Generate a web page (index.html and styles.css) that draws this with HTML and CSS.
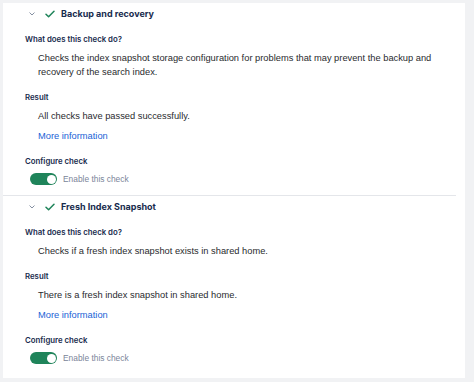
FILE: index.html
```html
<!DOCTYPE html>
<html>
<head>
<meta charset="utf-8">
<link rel="stylesheet" href="styles.css">
</head>
<body>
<div class="panel">
  <section class="check">
    <div class="check-head">
      <svg class="chev" width="6" height="4" viewBox="0 0 6 4"><path d="M0.8 0.8 L3 3 L5.2 0.8" fill="none" stroke="#8590a2" stroke-width="1" stroke-linecap="round" stroke-linejoin="round"/></svg>
      <svg class="tick" width="10" height="8" viewBox="0 0 10 8"><path d="M1 4.2 L3.6 6.8 L9 1.2" fill="none" stroke="#1f845a" stroke-width="1.5" stroke-linecap="round" stroke-linejoin="round"/></svg>
      <span class="title">Backup and recovery</span>
    </div>
    <div class="label first">What does this check do?</div>
    <p class="desc">Checks the index snapshot storage configuration for problems that may prevent the backup and recovery of the search index.</p>
    <div class="label gap">Result</div>
    <p class="value">All checks have passed successfully.</p>
    <a class="more" href="#">More information</a>
    <div class="label gap2">Configure check</div>
    <div class="toggle-row">
      <span class="toggle"><span class="knob"></span></span>
      <span class="toggle-text">Enable this check</span>
    </div>
  </section>
  <section class="check">
    <div class="check-head">
      <svg class="chev" width="6" height="4" viewBox="0 0 6 4"><path d="M0.8 0.8 L3 3 L5.2 0.8" fill="none" stroke="#8590a2" stroke-width="1" stroke-linecap="round" stroke-linejoin="round"/></svg>
      <svg class="tick" width="10" height="8" viewBox="0 0 10 8"><path d="M1 4.2 L3.6 6.8 L9 1.2" fill="none" stroke="#1f845a" stroke-width="1.5" stroke-linecap="round" stroke-linejoin="round"/></svg>
      <span class="title">Fresh Index Snapshot</span>
    </div>
    <div class="label first">What does this check do?</div>
    <p class="desc">Checks if a fresh index snapshot exists in shared home.</p>
    <div class="label gap">Result</div>
    <p class="value">There is a fresh index snapshot in shared home.</p>
    <a class="more" href="#">More information</a>
    <div class="label gap2">Configure check</div>
    <div class="toggle-row">
      <span class="toggle"><span class="knob"></span></span>
      <span class="toggle-text">Enable this check</span>
    </div>
  </section>
</div>
</body>
</html>
```
FILE: styles.css
```css
* { box-sizing: border-box; }
html, body { margin: 0; padding: 0; }
body {
  background: #f1f2f4;
  font-family: "Liberation Sans", Arial, sans-serif;
  color: #292a2e;
  width: 474px;
  height: 382px;
  overflow: hidden;
}
.panel {
  margin: 3px 9px 0 3px;
  height: 375px;
  background: #ffffff;
}
.check {
  padding-bottom: 10px;
  border-bottom: 1px solid #e4e6ea;
  margin-right: 9px;
}
.check:last-child { border-bottom: none; }
.check-head {
  height: 21px;
  display: flex;
  align-items: center;
  padding-left: 26px;
}
.chev { margin-top: 1px; }
.tick { margin-left: 10px; }
.title {
  margin-left: 6px;
  font-family: Inter, "Liberation Sans", sans-serif;
  font-size: 9px;
  font-weight: 700;
  color: #172b4d;
}
.label {
  padding-left: 22px;
  font-family: Inter, "Liberation Sans", sans-serif;
  font-size: 7.8px;
  font-weight: 600;
  line-height: 12px;
  color: #172b4d;
}
.label.first { margin-top: 9px; }
.label.gap { margin-top: 12px; }
.label.gap2 { margin-top: 12px; }
.desc {
  margin: 6px 0 0 0;
  padding-left: 35px;
  padding-right: 20px;
  font-size: 9.3px;
  line-height: 14px;
}
.value {
  margin: 6px 0 0 0;
  padding-left: 35px;
  font-size: 9.3px;
  line-height: 14px;
}
.more {
  display: block;
  margin-top: 6px;
  padding-left: 35px;
  font-size: 9.3px;
  line-height: 14px;
  color: #1a62d6;
  text-decoration: none;
}
.toggle-row {
  margin-top: 6px;
  padding-left: 27px;
  display: flex;
  align-items: center;
  height: 12px;
}
.toggle {
  width: 27px;
  height: 12px;
  border-radius: 6px;
  background: #1f845a;
  display: flex;
  align-items: center;
  justify-content: flex-end;
  padding-right: 1.5px;
}
.knob {
  width: 9px;
  height: 9px;
  border-radius: 50%;
  background: #ffffff;
}
.toggle-text {
  margin-left: 6px;
  font-size: 8.4px;
  color: #7a8499;
}
```
